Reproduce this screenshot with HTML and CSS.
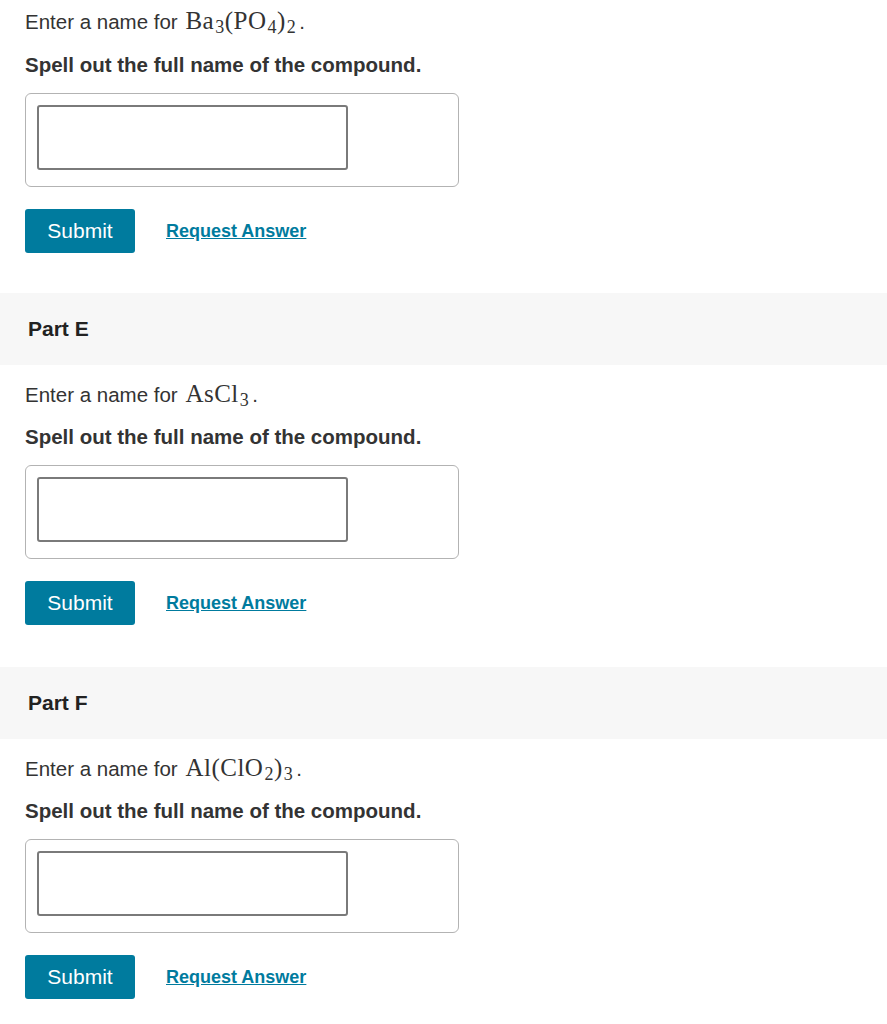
FILE: index.html
```html
<!DOCTYPE html>
<html lang="en">
<head>
    <meta charset="UTF-8">
    <title>Naming compounds</title>
    <link rel="stylesheet" href="styles.css">
</head>
<body>
    <section class="part part-first">
        <div class="part-body">
            <p class="prompt">Enter a name for <span class="math">Ba<sub>3</sub>(PO<sub>4</sub>)<sub>2</sub></span>.</p>
            <p class="instruction">Spell out the full name of the compound.</p>
            <div class="answer-box">
                <input type="text" class="answer-input" aria-label="Answer">
            </div>
            <div class="actions">
                <button class="submit-button">Submit</button>
                <a href="#" class="request-link">Request Answer</a>
            </div>
        </div>
    </section>

    <section class="part">
        <div class="part-header">Part E</div>
        <div class="part-body">
            <p class="prompt">Enter a name for <span class="math">AsCl<sub>3</sub></span>.</p>
            <p class="instruction">Spell out the full name of the compound.</p>
            <div class="answer-box">
                <input type="text" class="answer-input" aria-label="Answer">
            </div>
            <div class="actions">
                <button class="submit-button">Submit</button>
                <a href="#" class="request-link">Request Answer</a>
            </div>
        </div>
    </section>

    <section class="part">
        <div class="part-header">Part F</div>
        <div class="part-body">
            <p class="prompt">Enter a name for <span class="math">Al(ClO<sub>2</sub>)<sub>3</sub></span>.</p>
            <p class="instruction">Spell out the full name of the compound.</p>
            <div class="answer-box">
                <input type="text" class="answer-input" aria-label="Answer">
            </div>
            <div class="actions">
                <button class="submit-button">Submit</button>
                <a href="#" class="request-link">Request Answer</a>
            </div>
        </div>
    </section>
</body>
</html>
```

FILE: styles.css
```css
:root {
    --text-color: #333333;
    --accent-color: #007b9e;
    --band-color: #f7f7f7;
}

* {
    margin: 0;
    padding: 0;
    box-sizing: border-box;
    font-family: 'Liberation Sans', Arial, sans-serif;
}

body {
    background: white;
    color: var(--text-color);
    width: 887px;
}

.part-header {
    background-color: var(--band-color);
    height: 72px;
    display: flex;
    align-items: center;
    padding-left: 28px;
    font-size: 21px;
    font-weight: 700;
    color: #222;
}

.part-body {
    padding: 17px 25px 42px;
}

.part-first .part-body {
    padding-top: 8px;
    padding-bottom: 40px;
}

.prompt {
    font-size: 20.5px;
    line-height: 24px;
}

.part-first .prompt {
    line-height: 27px;
}

.math {
    font-family: 'Liberation Serif', 'Times New Roman', serif;
    font-size: 25px;
    line-height: 24px;
    letter-spacing: 0.5px;
    margin-left: 2px;
    margin-right: 3px;
}

.math sub {
    font-family: inherit;
    font-size: 18px;
    line-height: 0;
    vertical-align: -4px;
    margin-left: 1px;
}

.instruction {
    font-size: 20.5px;
    font-weight: 700;
    line-height: 24px;
    margin-top: 18px;
}

.answer-box {
    margin-top: 16px;
    width: 434px;
    height: 94px;
    border: 1px solid #b3b3b3;
    border-radius: 6px;
    padding: 11px;
}

.answer-input {
    display: block;
    width: 311px;
    height: 65px;
    border: 2px solid #7a7a7a;
    border-radius: 3px;
    font-size: 20px;
    padding: 0 8px;
    background: white;
}

.actions {
    margin-top: 22px;
    display: flex;
    align-items: center;
    gap: 31px;
}

.submit-button {
    width: 110px;
    height: 44px;
    background-color: var(--accent-color);
    color: white;
    border: none;
    border-radius: 3px;
    font-size: 21px;
}

.request-link {
    color: var(--accent-color);
    font-size: 18px;
    font-weight: 700;
    text-decoration: underline;
}
```
